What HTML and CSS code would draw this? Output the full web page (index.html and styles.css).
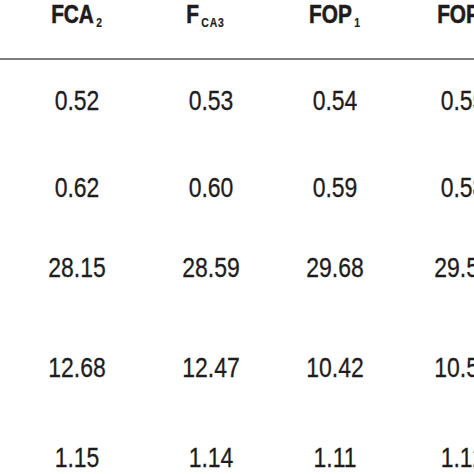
FILE: index.html
```html
<!DOCTYPE html>
<html>
<head>
<meta charset="utf-8">
<link rel="stylesheet" href="styles.css">
</head>
<body>
<div class="table">
  <div class="head">
    <div class="h">FCA<sub>2</sub></div>
    <div class="h shift">F<sub>CA3</sub></div>
    <div class="h">FOP<sub>1</sub></div>
    <div class="h">FOP<sub>2</sub></div>
  </div>
  <div class="rule"></div>
  <div class="body">
    <div class="c">0.52</div><div class="c">0.53</div><div class="c">0.54</div><div class="c">0.55</div>
    <div class="c">0.62</div><div class="c">0.60</div><div class="c">0.59</div><div class="c">0.58</div>
    <div class="c">28.15</div><div class="c">28.59</div><div class="c">29.68</div><div class="c">29.54</div>
    <div class="c">12.68</div><div class="c">12.47</div><div class="c">10.42</div><div class="c">10.56</div>
    <div class="c">1.15</div><div class="c">1.14</div><div class="c">1.11</div><div class="c">1.12</div>
  </div>
</div>
</body>
</html>
```
FILE: styles.css
```css
html, body {
  margin: 0;
  padding: 0;
  background: #ffffff;
  overflow: hidden;
  width: 474px;
  height: 474px;
}
.table {
  width: 524px;
  color: #1e1c1d;
  font-family: "Liberation Sans", Arial, sans-serif;
}
.head, .body {
  display: grid;
  grid-template-columns: 154px 114px 134px 122px;
}
.head {
  height: 58px;
  padding-top: 0;
  box-sizing: border-box;
  align-items: start;
}
.h {
  text-align: center;
  font-weight: bold;
  font-size: 26px;
  line-height: 28px;
  height: 28px;
  transform: scaleX(0.8);
  -webkit-text-stroke: 0.6px #1e1c1d;
}
.h sub {
  font-size: 13px;
  line-height: 0;
  vertical-align: -4px;
  margin-left: 3px;
  letter-spacing: 1px;
  -webkit-text-stroke: 0.2px #1e1c1d;
}
.shift {
  padding-right: 14px;
}
.rule {
  height: 2px;
  width: 474px;
  background: #7d7d7d;
}
.body {
  padding-top: 27px;
  grid-template-rows: 87px 80px 100px 90px 28px;
  align-items: start;
}
.c {
  text-align: center;
  font-size: 28px;
  line-height: 28px;
  height: 28px;
  transform: scaleX(0.82);
  -webkit-text-stroke: 0.3px #1e1c1d;
}
```
